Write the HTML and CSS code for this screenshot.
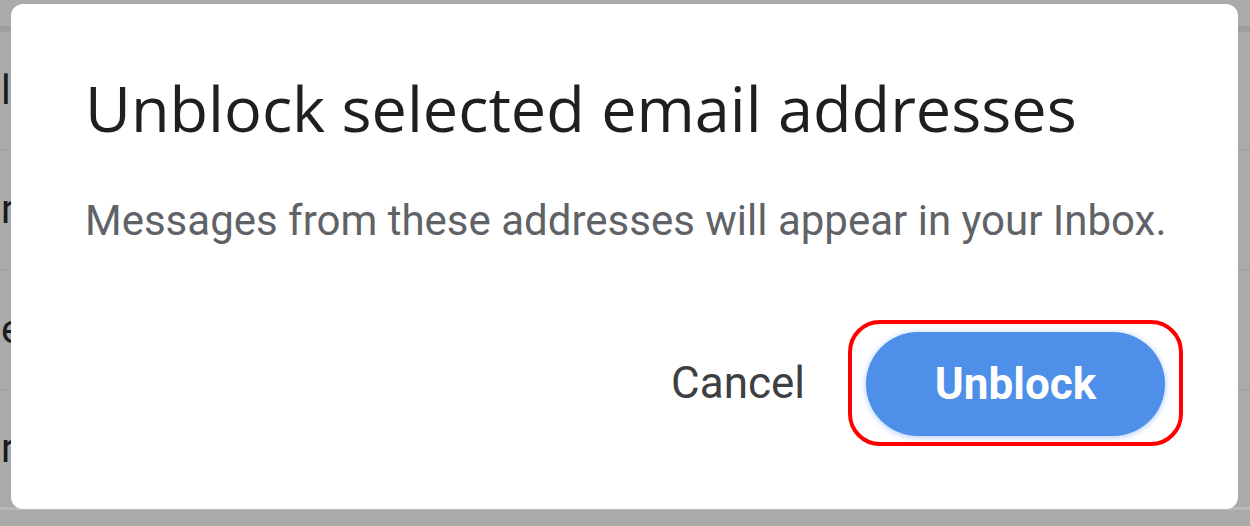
FILE: index.html
```html
<!DOCTYPE html>
<html lang="en">
<head>
<meta charset="utf-8">
<title>Unblock selected email addresses</title>
<link rel="stylesheet" href="styles.css">
</head>
<body>
<div class="page">
  <div class="topband"></div>
  <div class="list">
    <div class="row"><span class="frag">l</span></div>
    <div class="row"><span class="frag">r</span></div>
    <div class="row"><span class="frag">e</span></div>
    <div class="row row-last"><span class="frag">r</span></div>
  </div>
  <div class="dialog" role="dialog" aria-labelledby="dlg-title">
    <h1 class="title" id="dlg-title">Unblock selected email addresses</h1>
    <p class="body">Messages from these addresses will appear in your Inbox.</p>
    <div class="actions">
      <button class="btn-text" type="button">Cancel</button>
      <div class="highlight">
        <button class="btn-primary" type="button">Unblock</button>
      </div>
    </div>
  </div>
</div>
</body>
</html>
```
FILE: styles.css
```css
html, body {
  margin: 0;
  padding: 0;
}
body {
  width: 1250px;
  height: 526px;
  overflow: hidden;
  background: #a9a9a9;
  font-family: Roboto, "Liberation Sans", Arial, sans-serif;
}
.page {
  position: relative;
  width: 1250px;
  height: 526px;
  box-sizing: border-box;
  padding-top: 26px;
  background: #aaaaaa;
}
.topband {
  height: 6px;
  background: #9d9d9d;
}
.list {
  display: flex;
  flex-direction: column;
}
.row {
  height: 119px;
  border-bottom: 1px solid #9e9e9e;
  display: flex;
  align-items: center;
}
.row:first-child {
  height: 117px;
}
.row-last {
  height: 117px;
  border-bottom: 3px solid #b9b9b9;
}
.frag {
  font-size: 40px;
  color: #1b1b1b;
  margin-left: 1px;
}
.dialog {
  position: absolute;
  left: 11px;
  top: 4px;
  width: 1227px;
  height: 505px;
  box-sizing: border-box;
  background: #ffffff;
  border-radius: 12px;
  padding: 64px 55px 0 74px;
  display: flex;
  flex-direction: column;
}
.title {
  margin: 0;
  font-family: "Open Sans", Roboto, sans-serif;
  font-weight: 400;
  font-size: 63px;
  line-height: 80px;
  color: #1f1f1f;
}
.body {
  margin: 45px 0 0;
  font-family: Roboto, "Liberation Sans", sans-serif;
  font-size: 42px;
  line-height: 56px;
  color: #5f6368;
}
.actions {
  margin-top: 71px;
  display: flex;
  justify-content: flex-end;
  align-items: center;
  gap: 43px;
}
.btn-text {
  background: none;
  border: none;
  padding: 0;
  font-family: Roboto, "Liberation Sans", sans-serif;
  font-size: 44px;
  color: #3c4043;
  cursor: pointer;
}
.highlight {
  border: 4px solid #ff0000;
  border-radius: 32px;
  padding: 8px 14px 6px;
}
.btn-primary {
  display: block;
  width: 299px;
  height: 104px;
  border: none;
  border-radius: 52px;
  background: #4d8fe9;
  color: #ffffff;
  font-family: Roboto, "Liberation Sans", sans-serif;
  font-weight: 700;
  font-size: 44px;
  box-shadow: 0 1px 6px rgba(66,133,244,0.45);
  cursor: pointer;
}
```
